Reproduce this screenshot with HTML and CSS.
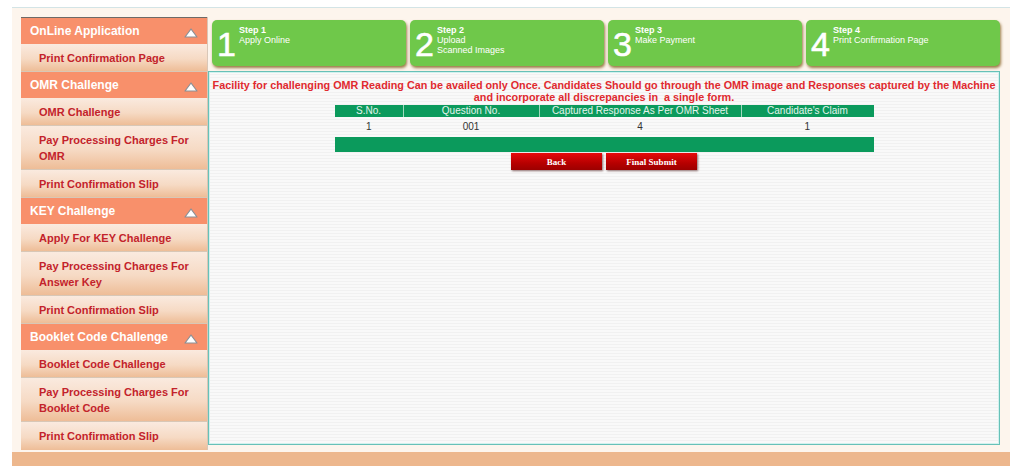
FILE: index.html
```html
<!DOCTYPE html>
<html>
<head>
<meta charset="utf-8">
<link rel="stylesheet" href="styles.css">
</head>
<body>
<div class="page">
  <aside class="sidebar">
    <div class="sb-head">OnLine Application <span class="tri"><svg width="14" height="10" viewBox="0 0 14 10"><polygon points="7,1 13,9 1,9" fill="#fff" stroke="#8a8f96" stroke-width="1.2" stroke-linejoin="round"/></svg></span></div>
    <div class="sb-item">Print Confirmation Page</div>
    <div class="sb-head">OMR Challenge <span class="tri"><svg width="14" height="10" viewBox="0 0 14 10"><polygon points="7,1 13,9 1,9" fill="#fff" stroke="#8a8f96" stroke-width="1.2" stroke-linejoin="round"/></svg></span></div>
    <div class="sb-item">OMR Challenge</div>
    <div class="sb-item">Pay Processing Charges For OMR</div>
    <div class="sb-item">Print Confirmation Slip</div>
    <div class="sb-head">KEY Challenge <span class="tri"><svg width="14" height="10" viewBox="0 0 14 10"><polygon points="7,1 13,9 1,9" fill="#fff" stroke="#8a8f96" stroke-width="1.2" stroke-linejoin="round"/></svg></span></div>
    <div class="sb-item">Apply For KEY Challenge</div>
    <div class="sb-item">Pay Processing Charges For Answer Key</div>
    <div class="sb-item">Print Confirmation Slip</div>
    <div class="sb-head">Booklet Code Challenge <span class="tri"><svg width="14" height="10" viewBox="0 0 14 10"><polygon points="7,1 13,9 1,9" fill="#fff" stroke="#8a8f96" stroke-width="1.2" stroke-linejoin="round"/></svg></span></div>
    <div class="sb-item">Booklet Code Challenge</div>
    <div class="sb-item">Pay Processing Charges For Booklet Code</div>
    <div class="sb-item last">Print Confirmation Slip</div>
  </aside>
  <main class="content">
    <div class="steps">
      <div class="step"><span class="num">1</span><div class="stxt"><b>Step 1</b><span>Apply Online</span></div></div>
      <div class="step"><span class="num">2</span><div class="stxt"><b>Step 2</b><span>Upload</span><span>Scanned Images</span></div></div>
      <div class="step"><span class="num">3</span><div class="stxt"><b>Step 3</b><span>Make Payment</span></div></div>
      <div class="step"><span class="num">4</span><div class="stxt"><b>Step 4</b><span>Print Confirmation Page</span></div></div>
    </div>
    <section class="panel">
      <p class="notice">Facility for challenging OMR Reading Can be availed only Once. Candidates Should go through the OMR image and Responses captured by the Machine<br>and incorporate all discrepancies in &nbsp;a single form.</p>
      <table class="grid">
        <thead>
          <tr><th class="c1">S.No.</th><th class="c2">Question No.</th><th class="c3">Captured Response As Per OMR Sheet</th><th class="c4">Candidate's Claim</th></tr>
        </thead>
        <tbody>
          <tr><td>1</td><td>001</td><td>4</td><td>1</td></tr>
          <tr class="foot"><td colspan="4"></td></tr>
        </tbody>
      </table>
      <div class="buttons">
        <button class="btn">Back</button>
        <button class="btn">Final Submit</button>
      </div>
    </section>
  </main>
</div>
<div class="footer"></div>
</body>
</html>
```

FILE: styles.css
```css
html, body {
  margin: 0;
  padding: 0;
  background: #ffffff;
  font-family: "Liberation Sans", Arial, sans-serif;
}

.page {
  margin: 7px 0 0 12px;
  width: 979px;
  padding: 10px 10px 2px 9px;
  background: #fdf5ed;
  border-top: 1px solid #d3e4e6;
  display: flex;
  align-items: flex-start;
}

.sidebar {
  width: 186px;
  flex: none;
  border-top: 1px solid #6e6a66;
  margin-top: -1px;
  box-shadow: 1px 0 0 #d9c7b8;
}

.sb-head {
  height: 26px;
  line-height: 26px;
  padding-left: 9px;
  background: #f8906b;
  color: #ffffff;
  font-weight: bold;
  font-size: 12px;
  display: flex;
  justify-content: space-between;
  align-items: center;
}

.tri {
  width: 14px;
  height: 10px;
  margin-right: 9px;
  margin-top: 4px;
  display: flex;
}

.sb-item {
  padding: 6px 14px 5px 18px;
  line-height: 16px;
  font-size: 11px;
  font-weight: bold;
  color: #c3232b;
  background: linear-gradient(#faeadf, #f6dac4 55%, #eebd97);
  border-bottom: 1px solid #d8c7b6;
}

.sb-item.last {
  border-bottom: none;
  padding-bottom: 6px;
}

.content {
  flex: 1;
  min-width: 0;
  display: flex;
  flex-direction: column;
  margin-left: 1px;
}

.steps {
  display: flex;
  gap: 4px;
  margin: 2px 0 0 4px;
}

.step {
  width: 194px;
  height: 46px;
  box-sizing: border-box;
  background: #6fc84a;
  border-radius: 5px;
  box-shadow: 1px 2px 3px #9a7a44;
  display: flex;
  align-items: flex-start;
  padding: 4px 0 0 5px;
  color: #ffffff;
}

.num {
  font-size: 34px;
  line-height: 38px;
  margin-top: 1px;
  width: 22px;
  -webkit-text-stroke: 0.6px #ffffff;
}

.stxt {
  display: flex;
  flex-direction: column;
  font-size: 9px;
  line-height: 10px;
  margin-top: 1px;
}

.stxt b {
  font-size: 9px;
}

.panel {
  margin-top: 5px;
  height: 374px;
  box-sizing: border-box;
  border: 1px solid #67c1b8;
  box-shadow: inset 0 0 0 1px #d2f1ee;
  background: repeating-linear-gradient(#f9f9f9 0, #f9f9f9 2px, #f1f1f1 2px, #f1f1f1 3px);
  display: flex;
  flex-direction: column;
  align-items: center;
  overflow: hidden;
}

.notice {
  margin: 7px 0 0;
  color: #e02a2f;
  font-weight: bold;
  font-size: 10.8px;
  line-height: 12px;
  text-align: center;
  white-space: nowrap;
}

.grid {
  width: 539px;
  border-collapse: collapse;
  margin-top: 2px;
  font-size: 10px;
}

.grid th {
  background: #0b9a5c;
  color: #e3f4ec;
  font-weight: normal;
  height: 12px;
  padding: 0;
  line-height: 12px;
  border-left: 1px solid #9fd8bd;
}

.grid th.c1 { border-left: none; width: 68px; }
.grid th.c2 { width: 135px; }
.grid th.c3 { width: 201px; }

.grid td {
  text-align: center;
  color: #333333;
  height: 20px;
  padding: 0;
  line-height: 20px;
}

.grid tr.foot td {
  background: #0b9a5c;
  height: 15px;
}

.buttons {
  display: flex;
  gap: 4px;
  margin-top: 1px;
}

.btn {
  width: 91px;
  height: 17px;
  padding: 0;
  border: none;
  background: linear-gradient(#e60a0a, #b60000 60%, #9c0000);
  box-shadow: 1px 1px 2px #8d6f6f;
  color: #ffffff;
  font-family: "Liberation Serif", "Times New Roman", serif;
  font-weight: bold;
  font-size: 9px;
}

.footer {
  margin-left: 12px;
  width: 998px;
  height: 14px;
  background: #edb78d;
}
```
